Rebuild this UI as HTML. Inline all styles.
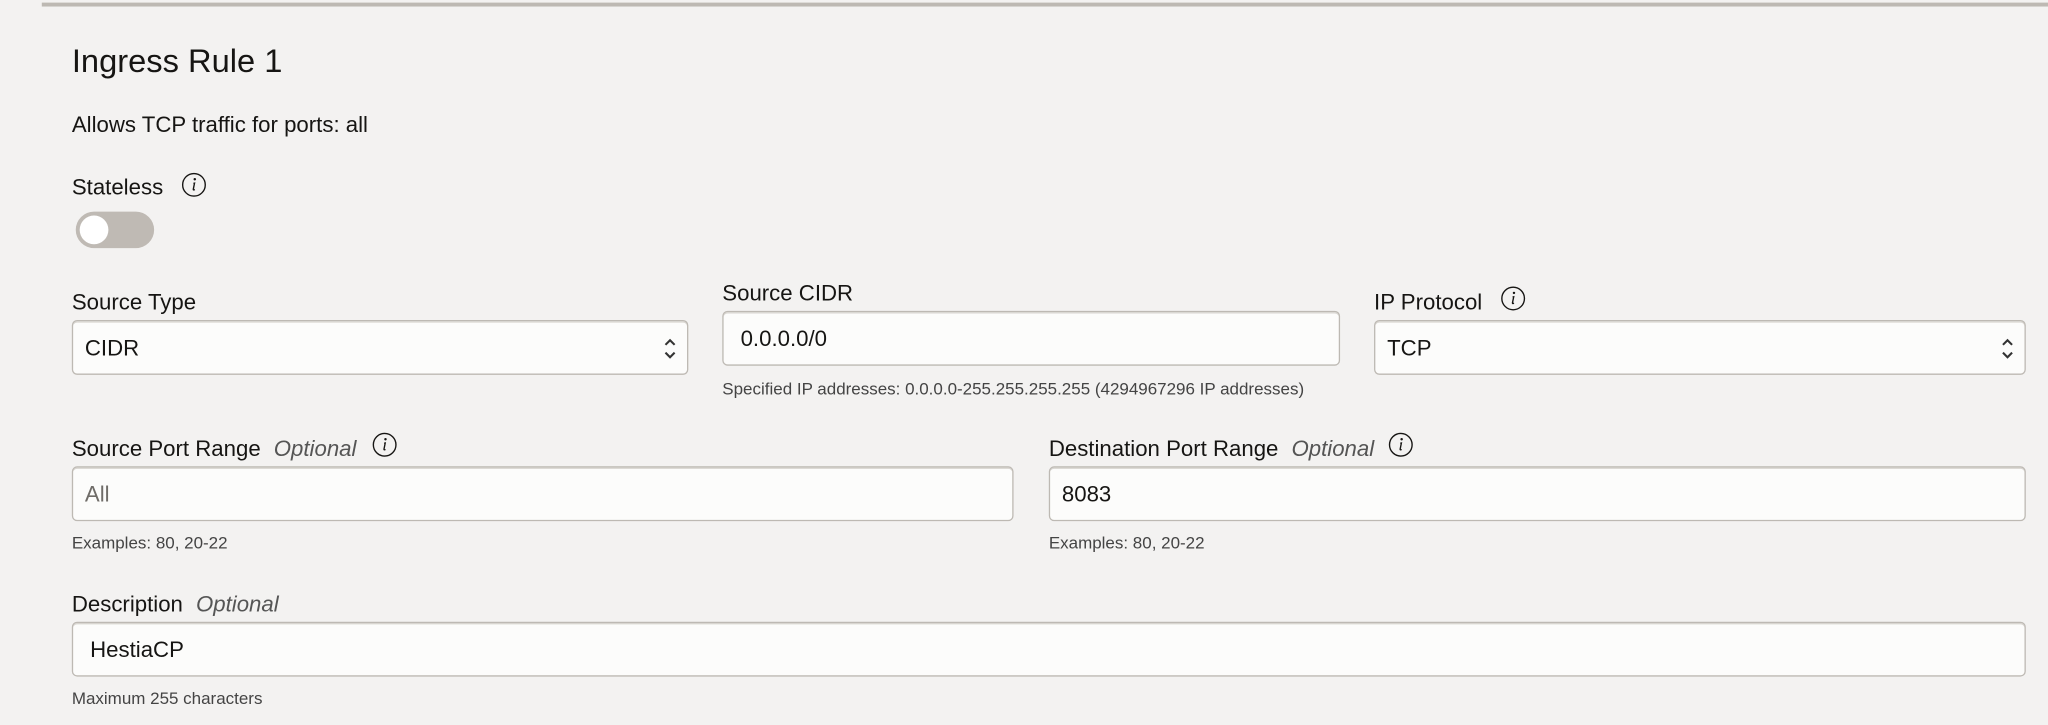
<!DOCTYPE html>
<html><head><meta charset="utf-8"><style>
html,body{margin:0;padding:0;background:#f3f2f1;overflow:hidden;width:2048px;height:724px}
#s{position:absolute;left:0;top:0;width:1568px;height:555px;transform:scale(1.306122);transform-origin:0 0;font-family:"Liberation Sans",sans-serif;color:#161513}
.a{position:absolute;white-space:nowrap}
.lbl{font-size:17px;line-height:19px}
.opt{font-style:italic;color:#555;margin-left:10px}
.box{position:absolute;height:42px;border:1px solid #bdb9b3;border-radius:4px;background:#fcfcfb;box-shadow:inset 0 1px 0 #d8d5d0;box-sizing:border-box;font-size:17px;line-height:42px;padding-left:9px}
.help{font-size:13px;color:#444;line-height:15px}
.i{position:absolute;width:19px;height:19px}
.arr{position:absolute;right:8px;top:12px;width:10px;height:18px}
</style></head><body><div id="s">
<div class="a" style="left:32px;top:2px;width:1536px;height:3px;background:#bdb9b3"></div>
<div class="a" style="left:55px;top:33px;font-size:25px;line-height:28px">Ingress Rule 1</div>
<div class="a lbl" style="left:55px;top:86px">Allows TCP traffic for ports: all</div>
<div class="a lbl" style="left:55px;top:134px">Stateless</div>
<svg class="i" style="left:139px;top:132px" viewBox="0 0 18 18"><circle cx="9" cy="9" r="8.2" fill="none" stroke="#161513" stroke-width="1"/><circle cx="9.6" cy="5" r="0.9" fill="#161513"/><path d="M8.6 8 L9.4 7.8 L8.5 12.3 Q8.5 13 9.6 12.4" fill="none" stroke="#161513" stroke-width="1"/></svg>
<div class="a" style="left:58px;top:162px;width:60px;height:28px;border-radius:14px;background:#bfbab4"></div>
<div class="a" style="left:61px;top:165px;width:22px;height:22px;border-radius:11px;background:#fff"></div>

<div class="a lbl" style="left:55px;top:222px">Source Type</div>
<div class="box" style="left:55px;top:245px;width:472px">CIDR<svg class="arr" viewBox="0 0 10 18"><path d="M1.5 6 L5 2.5 L8.5 6 M1.5 12 L5 15.5 L8.5 12" fill="none" stroke="#333" stroke-width="1.6"/></svg></div>

<div class="a lbl" style="left:553px;top:215px">Source CIDR</div>
<div class="box" style="left:553px;top:238px;width:473px;padding-left:13px">0.0.0.0/0</div>
<div class="a help" style="left:553px;top:290px">Specified IP addresses: 0.0.0.0-255.255.255.255 (4294967296 IP addresses)</div>

<div class="a lbl" style="left:1052px;top:222px">IP Protocol</div>
<svg class="i" style="left:1149px;top:219px" viewBox="0 0 18 18"><circle cx="9" cy="9" r="8.2" fill="none" stroke="#161513" stroke-width="1"/><circle cx="9.6" cy="5" r="0.9" fill="#161513"/><path d="M8.6 8 L9.4 7.8 L8.5 12.3 Q8.5 13 9.6 12.4" fill="none" stroke="#161513" stroke-width="1"/></svg>
<div class="box" style="left:1052px;top:245px;width:499px">TCP<svg class="arr" viewBox="0 0 10 18"><path d="M1.5 6 L5 2.5 L8.5 6 M1.5 12 L5 15.5 L8.5 12" fill="none" stroke="#333" stroke-width="1.6"/></svg></div>

<div class="a lbl" style="left:55px;top:334px">Source Port Range<span class="opt">Optional</span></div>
<svg class="i" style="left:285px;top:331px" viewBox="0 0 18 18"><circle cx="9" cy="9" r="8.2" fill="none" stroke="#161513" stroke-width="1"/><circle cx="9.6" cy="5" r="0.9" fill="#161513"/><path d="M8.6 8 L9.4 7.8 L8.5 12.3 Q8.5 13 9.6 12.4" fill="none" stroke="#161513" stroke-width="1"/></svg>
<div class="box" style="left:55px;top:357px;width:721px;color:#6f6c68">All</div>
<div class="a help" style="left:55px;top:408px">Examples: 80, 20-22</div>

<div class="a lbl" style="left:803px;top:334px">Destination Port Range<span class="opt">Optional</span></div>
<svg class="i" style="left:1063px;top:331px" viewBox="0 0 18 18"><circle cx="9" cy="9" r="8.2" fill="none" stroke="#161513" stroke-width="1"/><circle cx="9.6" cy="5" r="0.9" fill="#161513"/><path d="M8.6 8 L9.4 7.8 L8.5 12.3 Q8.5 13 9.6 12.4" fill="none" stroke="#161513" stroke-width="1"/></svg>
<div class="box" style="left:803px;top:357px;width:748px">8083</div>
<div class="a help" style="left:803px;top:408px">Examples: 80, 20-22</div>

<div class="a lbl" style="left:55px;top:453px">Description<span class="opt">Optional</span></div>
<div class="box" style="left:55px;top:476px;width:1496px;padding-left:13px">HestiaCP</div>
<div class="a help" style="left:55px;top:527px">Maximum 255 characters</div>
</div></body></html>
